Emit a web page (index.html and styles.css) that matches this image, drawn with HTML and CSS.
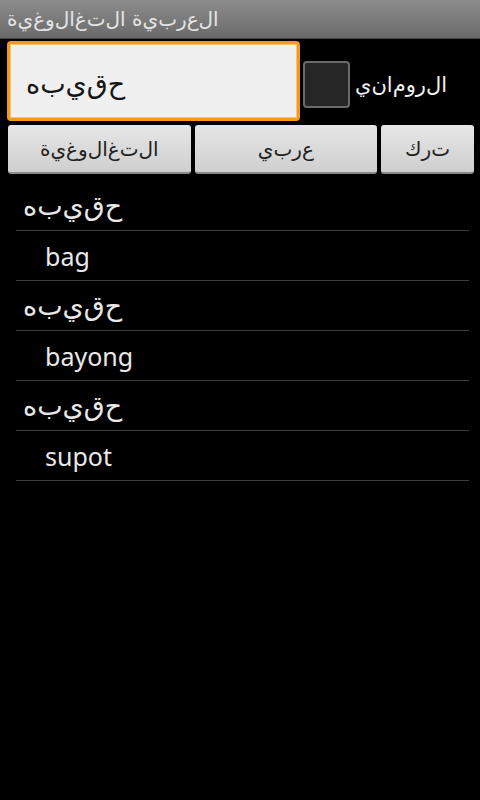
FILE: index.html
```html
<!DOCTYPE html>
<html lang="ar">
<head>
  <meta charset="UTF-8" />
  <meta name="viewport" content="width=device-width, initial-scale=1.0" />
  <title>العربية التغالوغية</title>
  <link rel="stylesheet" href="styles.css">
</head>
<body>
  <div class="titlebar">ا&zwnj;ل&zwnj;ع&zwnj;ر&zwnj;ب&zwnj;ي&zwnj;ة ا&zwnj;ل&zwnj;ت&zwnj;غ&zwnj;ا&zwnj;ل&zwnj;و&zwnj;غ&zwnj;ي&zwnj;ة</div>

  <div class="search-row">
    <div class="edit"><span>ح&zwnj;ق&zwnj;ي&zwnj;ب&zwnj;ه</span></div>
    <label class="roman">
      <span class="box"></span>
      <span class="roman-label">ا&zwnj;ل&zwnj;ر&zwnj;و&zwnj;م&zwnj;ا&zwnj;ن&zwnj;ي</span>
    </label>
  </div>

  <div class="buttons">
    <button class="btn wide">ا&zwnj;ل&zwnj;ت&zwnj;غ&zwnj;ا&zwnj;ل&zwnj;و&zwnj;غ&zwnj;ي&zwnj;ة</button>
    <button class="btn wide">ع&zwnj;ر&zwnj;ب&zwnj;ي</button>
    <button class="btn narrow">ت&zwnj;ر&zwnj;ك</button>
  </div>

  <ul class="results">
    <li class="word">ح&zwnj;ق&zwnj;ي&zwnj;ب&zwnj;ه</li>
    <li class="meaning">bag</li>
    <li class="word">ح&zwnj;ق&zwnj;ي&zwnj;ب&zwnj;ه</li>
    <li class="meaning">bayong</li>
    <li class="word">ح&zwnj;ق&zwnj;ي&zwnj;ب&zwnj;ه</li>
    <li class="meaning">supot</li>
  </ul>
</body>
</html>
```

FILE: styles.css
```css
body { margin: 0; background: #000; font-family: "Noto Sans", "DejaVu Sans", sans-serif; width: 480px; height: 800px; overflow: hidden; }

.titlebar { height: 38px; line-height: 38px; padding-left: 7px; background: linear-gradient(#8c8c8c, #6a6a6a); color: #e4e4e4; font-size: 20px; font-family: "DejaVu Sans", sans-serif; border-bottom: 1px solid #444; }

.search-row { display: flex; align-items: center; padding: 2px 8px 0 7px; gap: 3px; }
.edit { width: 271px; height: 74px; background: #f0f0f0; border: 3px solid #f39a1c; border-radius: 4px; display: flex; align-items: center; padding-left: 16px; box-shadow: inset 0 0 0 1px #f7c57a; }
.edit span { font-family: "DejaVu Sans", sans-serif; font-size: 27px; color: #151515; margin-top: 5px; }
.roman { display: flex; align-items: center; gap: 5px; margin-top: 7px; }
.box { width: 43px; height: 43px; background: #262626; border: 2px solid #6a6a6a; border-radius: 4px; }
.roman-label { color: #f0f0f0; font-family: "DejaVu Sans", sans-serif; font-size: 21px; }

.buttons { display: flex; gap: 4px; padding: 4px 6px 0 8px; }
.btn { height: 49px; border: none; border-radius: 3px; background: linear-gradient(#e6e6e6, #cfcfcf); color: #222; font-family: "DejaVu Sans", sans-serif; font-size: 20px; border-bottom: 2px solid #8a8a8a; }
.btn.wide { width: 183px; }
.btn.narrow { width: 93px; }

.results { list-style: none; margin: 7px 11px 0 16px; padding: 0; }
.results li { height: 49px; border-bottom: 1px solid #3c3c3c; display: flex; align-items: center; color: #e8e8e8; }
.word { padding-left: 7px; font-family: "DejaVu Sans", sans-serif; font-size: 27px; }
.meaning { padding-left: 29px; font-size: 25px; }
```
